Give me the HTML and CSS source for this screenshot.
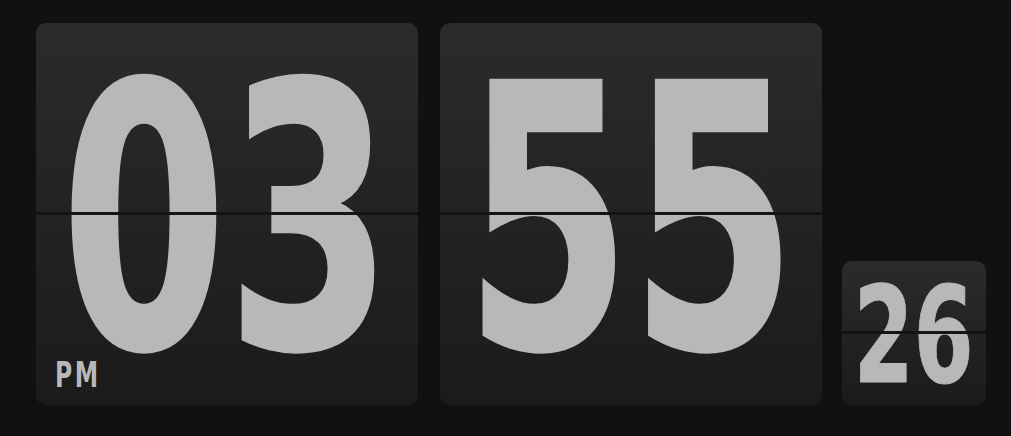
FILE: index.html
```html
<!DOCTYPE html>
<html>
<head>
<meta charset="utf-8">
<link rel="stylesheet" href="styles.css">
</head>
<body>
<div class="clock">
  <div class="card big">
    <span class="digits">03</span>
    <span class="ampm">PM</span>
  </div>
  <div class="card big">
    <span class="digits">55</span>
  </div>
  <div class="card small">
    <span class="digits">26</span>
  </div>
</div>
</body>
</html>
```
FILE: styles.css
```css
html, body {
  margin: 0;
  padding: 0;
  background: #111111;
  width: 1011px;
  height: 436px;
  overflow: hidden;
}
.clock {
  display: flex;
  align-items: flex-end;
  padding: 23px 0 0 36px;
  gap: 22px;
  font-family: "DejaVu Sans", sans-serif;
  font-weight: bold;
  color: #b8b8b8;
}
.card {
  position: relative;
  display: flex;
  align-items: center;
  justify-content: center;
  background: linear-gradient(to bottom, #2b2b2b 0%, #232323 50%, #1b1b1b 100%);
  border-radius: 10px;
  overflow: hidden;
}
.card::after {
  content: "";
  position: absolute;
  left: 0;
  right: 0;
  top: 50%;
  height: 3px;
  margin-top: -2px;
  background: #141414;
}
.big {
  width: 382px;
  height: 382px;
}
.small {
  width: 144px;
  height: 144px;
  margin-left: -2px;
}
.digits {
  display: inline-block;
  line-height: 1;
  transform: scaleX(0.65);
  white-space: nowrap;
}
.big .digits {
  font-size: 366px;
  padding-top: 11px;
  -webkit-text-stroke: 3px #b8b8b8;
}
.small .digits {
  font-size: 133px;
  padding-top: 7px;
  -webkit-text-stroke: 1px #b8b8b8;
}
.ampm {
  position: absolute;
  left: 19px;
  bottom: 12px;
  font-size: 35.6px;
  line-height: 1;
  letter-spacing: 4px;
  transform: scaleX(0.66);
  transform-origin: left bottom;
}
```
